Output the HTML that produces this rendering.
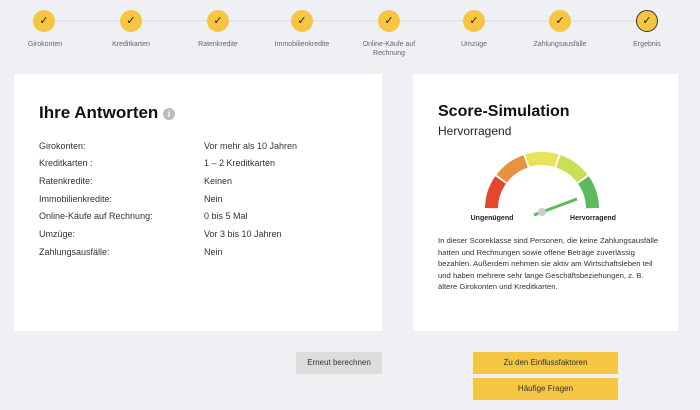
<!DOCTYPE html>
<html><head><meta charset="utf-8"><style>
*{margin:0;padding:0;box-sizing:border-box}
body{width:700px;height:410px;background:#eef0f3;font-family:"Liberation Sans",sans-serif;color:#222;position:relative;overflow:hidden}
.abs{position:absolute}
.line{left:44px;width:603px;top:20px;height:2px;background:#e3e5e8}
.c{width:22px;height:22px;border-radius:50%;background:#f6c643;top:10px;text-align:center;line-height:22px;font-size:11px;color:#222}
.lbl{top:40px;width:90px;text-align:center;font-size:7px;color:#666;line-height:9px}
.card{background:#fff}
.row{font-size:9px;color:#333;position:absolute}
.btn{font-size:8px;text-align:center;line-height:22px;color:#333}
</style></head><body>
<div class="abs line"></div>
<div class="abs c" style="left:33px">✓</div>
<div class="abs c" style="left:120px">✓</div>
<div class="abs c" style="left:207px">✓</div>
<div class="abs c" style="left:291px">✓</div>
<div class="abs c" style="left:378px">✓</div>
<div class="abs c" style="left:463px">✓</div>
<div class="abs c" style="left:549px">✓</div>
<div class="abs c" style="left:636px;border:1px solid #333;line-height:20px">✓</div>
<div class="abs lbl" style="left:0px">Girokonten</div>
<div class="abs lbl" style="left:86px">Kreditkarten</div>
<div class="abs lbl" style="left:173px">Ratenkredite</div>
<div class="abs lbl" style="left:257px">Immobilienkredite</div>
<div class="abs lbl" style="left:344px">Online-Käufe auf<br>Rechnung</div>
<div class="abs lbl" style="left:429px">Umzüge</div>
<div class="abs lbl" style="left:515px">Zahlungsausfälle</div>
<div class="abs lbl" style="left:602px">Ergebnis</div>

<div class="abs card" style="left:14px;top:74px;width:368px;height:257px"></div>
<div class="abs" style="left:39px;top:103px;font-size:17px;font-weight:bold;color:#111">Ihre Antworten <span style="display:inline-block;width:12px;height:12px;border-radius:50%;background:#bbb;color:#fff;font-size:9px;line-height:12px;text-align:center;vertical-align:1px">i</span></div>
<div class="row" style="left:39px;top:141px">Girokonten:</div><div class="row" style="left:204px;top:141px">Vor mehr als 10 Jahren</div>
<div class="row" style="left:39px;top:158px">Kreditkarten :</div><div class="row" style="left:204px;top:158px">1 – 2 Kreditkarten</div>
<div class="row" style="left:39px;top:176px">Ratenkredite:</div><div class="row" style="left:204px;top:176px">Keinen</div>
<div class="row" style="left:39px;top:194px">Immobilienkredite:</div><div class="row" style="left:204px;top:194px">Nein</div>
<div class="row" style="left:39px;top:211px">Online-Käufe auf Rechnung:</div><div class="row" style="left:204px;top:211px">0 bis 5 Mal</div>
<div class="row" style="left:39px;top:229px">Umzüge:</div><div class="row" style="left:204px;top:229px">Vor 3 bis 10 Jahren</div>
<div class="row" style="left:39px;top:247px">Zahlungsausfälle:</div><div class="row" style="left:204px;top:247px">Nein</div>

<div class="abs card" style="left:413px;top:74px;width:265px;height:257px"></div>
<div class="abs" style="left:438px;top:103px;font-size:16px;font-weight:bold;color:#111">Score-Simulation</div>
<div class="abs" style="left:438px;top:124px;font-size:12px;color:#222">Hervorragend</div>
<svg class="abs" style="left:0;top:0" width="700" height="410">
<g fill="none" stroke-width="13">
<path d="M491.5 208.1 A50.5 50.5 0 0 1 500.6 180" stroke="#e5472c"/>
<path d="M501.7 178.6 A50.5 50.5 0 0 1 525.6 161.3" stroke="#e8913f"/>
<path d="M527.2 160.7 A50.5 50.5 0 0 1 556.8 160.7" stroke="#e9e35b"/>
<path d="M558.4 161.3 A50.5 50.5 0 0 1 582.3 178.6" stroke="#c9df57"/>
<path d="M583.4 180 A50.5 50.5 0 0 1 592.5 208.1" stroke="#5db95d"/>
</g>
<line x1="534" y1="215" x2="577" y2="199" stroke="#5db95d" stroke-width="3"/>
<circle cx="542" cy="212" r="4" fill="#ccc"/>
<text x="492" y="220" font-size="7" font-weight="bold" text-anchor="middle" fill="#222" font-family="Liberation Sans">Ungenügend</text>
<text x="593" y="220" font-size="7" font-weight="bold" text-anchor="middle" fill="#222" font-family="Liberation Sans">Hervorragend</text>
</svg>
<div class="abs" style="left:438px;top:235px;white-space:nowrap;font-size:7.7px;line-height:11.6px;color:#333">In dieser Scoreklasse sind Personen, die keine Zahlungsausfälle<br>hatten und Rechnungen sowie offene Beträge zuverlässig<br>bezahlen. Außerdem nehmen sie aktiv am Wirtschaftsleben teil<br>und haben mehrere sehr lange Geschäftsbeziehungen, z. B.<br>ältere Girokonten und Kreditkarten.</div>

<div class="abs btn" style="left:296px;top:352px;width:86px;height:22px;background:#dcdcdc">Erneut berechnen</div>
<div class="abs btn" style="left:473px;top:352px;width:145px;height:22px;background:#f6c643">Zu den Einflussfaktoren</div>
<div class="abs btn" style="left:473px;top:378px;width:145px;height:22px;background:#f6c643">Häufige Fragen</div>
</body></html>
